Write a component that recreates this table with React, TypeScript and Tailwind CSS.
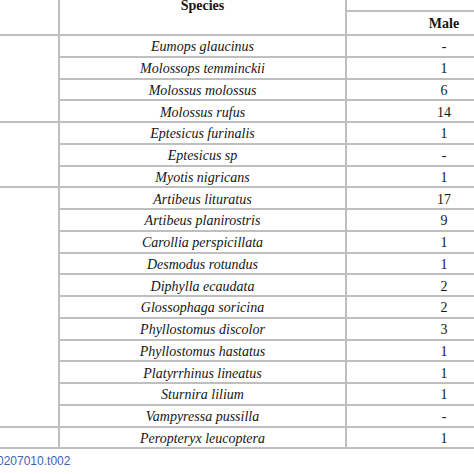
import React from "react";

type Row = { name: string; male: string };

const groups: Row[][] = [
  [
    { name: "Eumops glaucinus", male: "-" },
    { name: "Molossops temminckii", male: "1" },
    { name: "Molossus molossus", male: "6" },
    { name: "Molossus rufus", male: "14" },
  ],
  [
    { name: "Eptesicus furinalis", male: "1" },
    { name: "Eptesicus sp", male: "-" },
    { name: "Myotis nigricans", male: "1" },
  ],
  [
    { name: "Artibeus lituratus", male: "17" },
    { name: "Artibeus planirostris", male: "9" },
    { name: "Carollia perspicillata", male: "1" },
    { name: "Desmodus rotundus", male: "1" },
    { name: "Diphylla ecaudata", male: "2" },
    { name: "Glossophaga soricina", male: "2" },
    { name: "Phyllostomus discolor", male: "3" },
    { name: "Phyllostomus hastatus", male: "1" },
    { name: "Platyrrhinus lineatus", male: "1" },
    { name: "Sturnira lilium", male: "1" },
    { name: "Vampyressa pussilla", male: "-" },
  ],
  [{ name: "Peropteryx leucoptera", male: "1" }],
];

export default function App() {
  return (
    <div
      className="w-[474px] h-[474px] overflow-hidden bg-white text-[#161616]"
      style={{ fontFamily: '"Liberation Serif", "Times New Roman", serif' }}
    >
      <div className="w-[541px]">
        {/* header */}
        <div className="flex h-[36px] border-b-2 border-[#bfbfbf]">
          <div className="w-[60px] border-r-2 border-[#bfbfbf]" />
          <div className="w-[287px] border-r-2 border-[#bfbfbf] text-center text-[14px] font-bold leading-[14px] -mt-[1px]">
            Species
          </div>
          <div className="flex-1 flex flex-col">
            <div className="h-[15px] border-b-2 border-[#bfbfbf]" />
            <div className="flex-1 flex items-center justify-center text-[14px] font-bold pt-[1px]">
              Male
            </div>
          </div>
        </div>

        {/* body */}
        {groups.map((g, gi) => (
          <div key={gi} className="flex border-b-2 border-[#bfbfbf]">
            <div className="w-[60px] border-r-2 border-[#bfbfbf]" />
            <div className="flex-1">
              {g.map((r, ri) => (
                <div
                  key={r.name}
                  className={`flex ${ri < g.length - 1 ? "h-[21.75px] border-b-2 border-[#bfbfbf]" : "h-[19.75px]"}`}
                >
                  <div className="w-[287px] border-r-2 border-[#bfbfbf] flex items-center justify-center italic text-[14px] pt-[2px]">
                    {r.name}
                  </div>
                  <div className="flex-1 flex items-center justify-center text-[14px] pt-[2px]">
                    {r.male}
                  </div>
                </div>
              ))}
            </div>
          </div>
        ))}

        <div
          className="mt-[5px] -ml-[3px] text-[12px] leading-[14px] text-[#4262b9]"
          style={{ fontFamily: '"Liberation Sans", Arial, sans-serif' }}
        >
          0207010.t002
        </div>
      </div>
    </div>
  );
}
